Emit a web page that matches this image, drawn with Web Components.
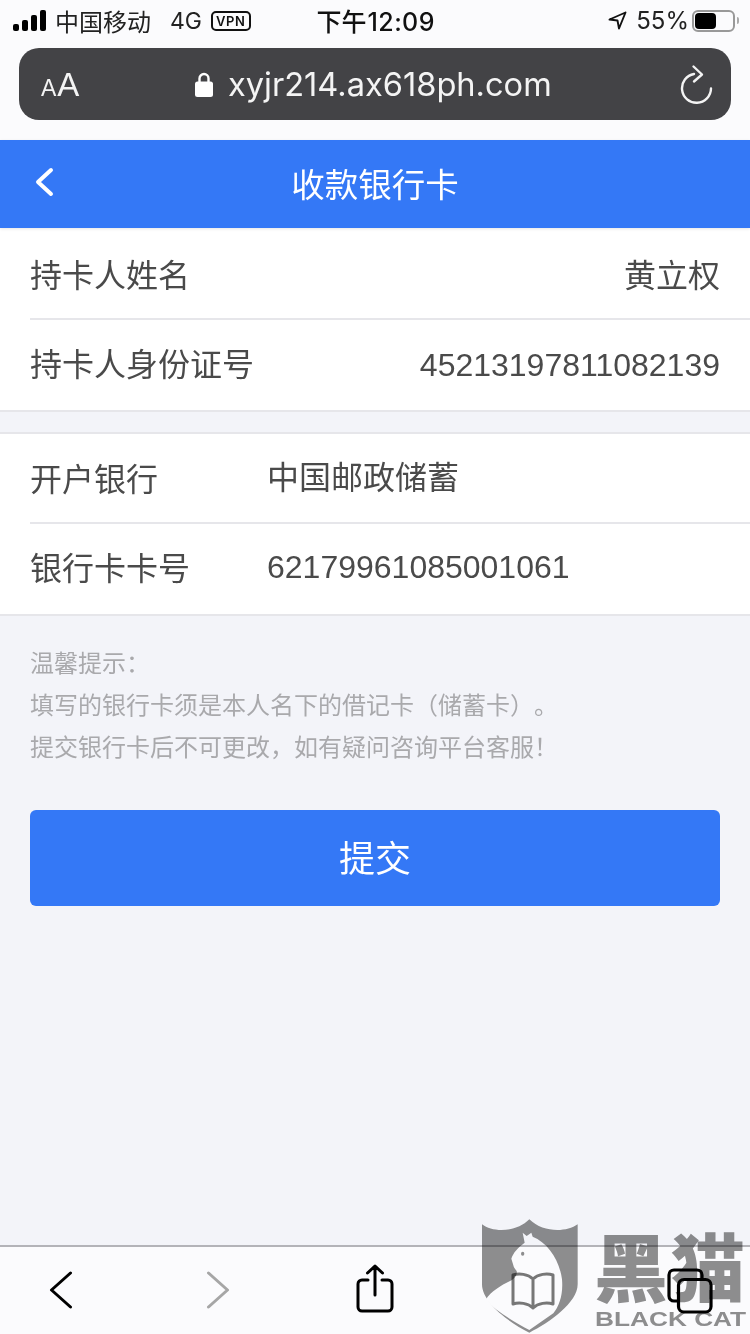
<!DOCTYPE html>
<html lang="zh">
<head>
<meta charset="utf-8">
<title>收款银行卡</title>
<style>
  html, body { margin: 0; padding: 0; }
  body {
    width: 750px;
    height: 1334px;
    overflow: hidden;
    position: relative;
    display: flex;
    flex-direction: column;
    background: #f3f4f9;
    font-family: "Liberation Sans", "Noto Sans CJK SC", sans-serif;
  }
</style>
</head>
<body>
  <ios-status></ios-status>
  <url-bar></url-bar>
  <app-header>收款银行卡</app-header>
  <info-group>
    <info-row label="持卡人姓名" side="end" style="padding-top:3px">黄立权</info-row>
    <info-row label="持卡人身份证号" side="end">45213197811082139</info-row>
  </info-group>
  <info-group spaced>
    <info-row label="开户银行" style="padding-top:3px">中国邮政储蓄</info-row>
    <info-row label="银行卡卡号">62179961085001061</info-row>
  </info-group>
  <tip-text>
    <div>温馨提示：</div>
    <div>填写的银行卡须是本人名下的借记卡（储蓄卡）。</div>
    <div>提交银行卡后不可更改，如有疑问咨询平台客服！</div>
  </tip-text>
  <submit-button>提交</submit-button>
  <safari-toolbar></safari-toolbar>
  <black-cat></black-cat>

<script>
class IosStatus extends HTMLElement {
  constructor() {
    super();
    this.attachShadow({ mode: 'open' });
    this.shadowRoot.innerHTML = `
      <style>
        :host {
          display: flex;
          align-items: center;
          height: 48px;
          padding: 0 11px 7px 13px;
          box-sizing: border-box;
          background: #fbfbfd;
          color: #111;
          font: 400 24px/32px "Noto Sans CJK SC", sans-serif;
        }
        .bars { display: flex; align-items: flex-end; gap: 3px; height: 21px; margin-bottom: 1px; }
        .bars i { display: block; width: 6px; background: #000; border-radius: 2px; }
        .carrier { margin-left: 9px; color: #222; white-space: nowrap; }
        .net { margin-left: 19px; font: 400 23px/32px Inter, sans-serif; color: #222; }
        .vpn {
          margin-left: 9px;
          border: 2px solid #111;
          border-radius: 5px;
          font: 600 13px/14px Inter, sans-serif;
          padding: 1px 3px;
          letter-spacing: .6px;
        }
        .time {
          margin-left: 66px;
          white-space: nowrap;
          font-weight: 500;
          font-size: 25px;
        }
        .time b { font: 500 25px/32px Inter, sans-serif; margin-left: 1px; letter-spacing: .4px; }
        .right { margin-left: auto; display: flex; align-items: center; }
        .pct { font: 400 24px/32px Inter, sans-serif; color: #222; margin: 0 3px 0 9px; }
        .batt {
          box-sizing: border-box;
          width: 43px; height: 22px;
          border: 2px solid #999;
          border-radius: 6px;
          padding: 1px;
        }
        .batt i { display: block; width: 21px; height: 16px; background: #000; border-radius: 4px; }
        .nub { width: 2px; height: 7px; background: #aaa; border-radius: 0 2px 2px 0; margin-left: 2px; }
      </style>
      <div class="bars">
        <i style="height:7px"></i><i style="height:11px"></i><i style="height:16px"></i><i style="height:21px"></i>
      </div>
      <span class="carrier">中国移动</span>
      <span class="net">4G</span>
      <span class="vpn">VPN</span>
      <span class="time">下午<b>12:09</b></span>
      <div class="right">
        <svg width="19" height="19" viewBox="0 0 19 19" fill="none" stroke="#111" stroke-width="1.9" stroke-linejoin="round">
          <path d="M17.5 1.5 1.5 8.5l8 1 1.5 8z"/>
        </svg>
        <span class="pct">55%</span>
        <div class="batt"><i></i></div>
        <div class="nub"></div>
      </div>
    `;
  }
}

class UrlBar extends HTMLElement {
  constructor() {
    super();
    this.attachShadow({ mode: 'open' });
    this.shadowRoot.innerHTML = `
      <style>
        :host {
          display: block;
          padding: 0 19px 20px;
          background: #fbfbfd;
        }
        .pill {
          height: 72px;
          background: #434346;
          border-radius: 20px;
          display: grid;
          grid-template-columns: 154px 1fr auto;
          align-items: center;
          color: #fff;
          padding: 0 18px 0 22px;
        }
        .aa { font: 400 33px/1 "Liberation Sans", sans-serif; color: #f4f4f4; white-space: nowrap; }
        .aa small { font-size: 23px; margin-right: 1px; }
        .addr {
          display: flex;
          align-items: center;
          gap: 15px;
          font: 400 32.6px/1 Inter, sans-serif;
          color: #f4f4f4;
          white-space: nowrap;
        }
        svg { display: block; }
      </style>
      <div class="pill">
        <span class="aa"><small>A</small>A</span>
        <div class="addr">
          <svg width="18" height="25" viewBox="0 0 18 25">
            <path d="M4.500 11V6.500a4.500 4.500 0 0 1 9 0V11" fill="none" stroke="#fff" stroke-width="2.4"/>
            <rect x="0" y="9.500" width="18" height="15.500" rx="2.500" fill="#fff"/>
          </svg>
          <span>xyjr214.ax618ph.com</span>
        </div>
        <svg width="34" height="40" viewBox="0 0 34 40" fill="none" stroke="#f4f4f4" stroke-width="2.4" stroke-linecap="round" stroke-linejoin="round">
          <path d="M15 10A14.500 14.500 0 1 0 32 24.500"/>
          <path d="M14.500 2.500l8.500 8-8 7"/>
        </svg>
      </div>
    `;
  }
}

class AppHeader extends HTMLElement {
  constructor() {
    super();
    this.attachShadow({ mode: 'open' });
    this.shadowRoot.innerHTML = `
      <style>
        :host {
          display: flex;
          align-items: center;
          justify-content: center;
          height: 88px;
          box-sizing: border-box;
          padding-bottom: 3px;
          background: #3478f6;
          color: #fff;
          font: 400 33.5px/1 "Noto Sans CJK SC", sans-serif;
          position: relative;
          box-shadow: 0 1px 3px rgba(0, 0, 0, .1);
        }
        svg { position: absolute; left: 34px; top: 27px; }
      </style>
      <svg width="20" height="30" viewBox="0 0 20 30" fill="none" stroke="#fff" stroke-width="4" stroke-linecap="round" stroke-linejoin="round">
        <path d="M17 3 4 15l13 12"/>
      </svg>
      <slot></slot>
    `;
  }
}

class InfoGroup extends HTMLElement {
  constructor() {
    super();
    this.attachShadow({ mode: 'open' });
    this.shadowRoot.innerHTML = `
      <style>
        :host {
          display: block;
          background: #fff;
          padding-top: 2px;
          border-bottom: 2px solid #e6e6ea;
        }
        :host([spaced]) {
          margin-top: 20px;
          padding-top: 0;
          border-top: 2px solid #e6e6ea;
        }
      </style>
      <slot></slot>
    `;
  }
}

class InfoRow extends HTMLElement {
  constructor() {
    super();
    this.attachShadow({ mode: 'open' });
    const end = this.getAttribute('side') === 'end';
    this.shadowRoot.innerHTML = `
      <style>
        :host {
          display: flex;
          align-items: center;
          height: 90px;
          margin-left: 30px;
          padding-right: 30px;
          box-sizing: border-box;
          font: 400 32px/1 "Liberation Sans", "Noto Sans CJK SC", sans-serif;
          color: #4a4a4a;
        }
        :host(:not(:last-child)) { border-bottom: 2px solid #e6e6ea; }
        .label { width: 237px; flex: none; white-space: nowrap; }
        .value {
          flex: 1;
          white-space: nowrap;
          text-align: ${end ? 'right' : 'left'};
          padding-bottom: ${end ? 0 : 4}px;
        }
      </style>
      <span class="label">${this.getAttribute('label')}</span>
      <span class="value"><slot></slot></span>
    `;
  }
}

class TipText extends HTMLElement {
  constructor() {
    super();
    this.attachShadow({ mode: 'open' });
    this.shadowRoot.innerHTML = `
      <style>
        :host {
          display: block;
          padding: 25px 30px 0;
          font: 400 24px/42px "Noto Sans CJK SC", sans-serif;
          color: #a9a9ac;
          text-spacing-trim: space-all;
          white-space: nowrap;
        }
      </style>
      <slot></slot>
    `;
  }
}

class SubmitButton extends HTMLElement {
  constructor() {
    super();
    this.attachShadow({ mode: 'open' });
    this.shadowRoot.innerHTML = `
      <style>
        :host {
          display: block;
          margin: 43px 30px 0;
        }
        button {
          display: block;
          width: 100%;
          height: 96px;
          padding: 0 0 4px;
          border: 0;
          border-radius: 6px;
          background: #3478f6;
          color: #fff;
          font: 400 36px/1 "Noto Sans CJK SC", sans-serif;
        }
      </style>
      <button type="button"><slot></slot></button>
    `;
  }
}

class SafariToolbar extends HTMLElement {
  constructor() {
    super();
    this.attachShadow({ mode: 'open' });
    this.shadowRoot.innerHTML = `
      <style>
        :host {
          display: block;
          margin-top: auto;
          height: 89px;
          box-sizing: border-box;
          border-top: 2px solid #b3b3b8;
          background: #fbfbfd;
        }
        .items {
          display: grid;
          grid-template-columns: repeat(5, 157px);
          margin-left: -18px;
          justify-items: center;
          align-items: start;
        }
        svg { display: block; }
      </style>
      <div class="items">
        <svg style="margin-top:24px" width="24" height="38" viewBox="0 0 24 38" fill="none" stroke="#000" stroke-width="3" stroke-linecap="round" stroke-linejoin="round">
          <path d="M21.500 2 2.500 19l19 17"/>
        </svg>
        <svg style="margin-top:24px" width="24" height="38" viewBox="0 0 24 38" fill="none" stroke="#a6a6a6" stroke-width="3" stroke-linecap="round" stroke-linejoin="round">
          <path d="M2.500 2l19 17-19 17"/>
        </svg>
        <svg style="margin-top:17px" width="38" height="49" viewBox="0 0 38 49" fill="none" stroke="#000" stroke-width="3" stroke-linecap="round" stroke-linejoin="round">
          <path d="M12 16H6a4 4 0 0 0-4 4v23a4 4 0 0 0 4 4h26a4 4 0 0 0 4-4V20a4 4 0 0 0-4-4h-6"/>
          <path d="M19 31V2M11.500 9 19 2l7.500 7"/>
        </svg>
        <svg style="margin:25px 0 0 2px" width="46" height="38" viewBox="0 0 46 38" fill="none" stroke="#777" stroke-width="3" stroke-linecap="round" stroke-linejoin="round">
          <path d="M23 7C18 2 9 1 3 3v29c6-2 15-1 20 4 5-5 14-6 20-4V3c-6-2-15-1-20 4zM23 7v29"/>
        </svg>
        <svg style="margin:21px 0 0 2px" width="46" height="46" viewBox="0 0 46 46" fill="none" stroke="#000" stroke-width="3.200" stroke-linejoin="round">
          <path d="M11 33H7a5 5 0 0 1-5-5V7a5 5 0 0 1 5-5h23a5 5 0 0 1 5 5v4"/>
          <rect x="11.500" y="11.500" width="32.500" height="32.500" rx="5.500"/>
        </svg>
      </div>
    `;
  }
}

class BlackCat extends HTMLElement {
  constructor() {
    super();
    this.attachShadow({ mode: 'open' });
    this.shadowRoot.innerHTML = `
      <style>
        :host {
          display: block;
          position: absolute;
          left: 476px;
          top: 1216px;
          width: 274px;
          height: 118px;
          pointer-events: none;
          mix-blend-mode: multiply;
        }
        svg { position: absolute; left: 0; top: 0; }
        .zh {
          position: absolute;
          left: 118px;
          top: 11px;
          font: 900 74px/74px "Noto Sans CJK SC", sans-serif;
          letter-spacing: 3px;
          color: #8f8f8f;
          white-space: nowrap;
        }
        .en {
          position: absolute;
          left: 119px;
          top: 91px;
          font: 700 21px/24px "Liberation Sans", sans-serif;
          color: #8f8f8f;
          white-space: nowrap;
          transform: scaleX(1.25);
          transform-origin: left center;
        }
      </style>
      <svg width="110" height="118" viewBox="0 0 330 354">
        <path d="M18 25C50 50 120 50 160 10c40 40 110 40 145 15v180c0 55-85 115-145 145C100 320 18 260 18 205z" fill="#8f8f8f"/>
        <path d="M30 250c15-25 50-45 78-58 10-7 16-17 14-27-6-7-10-13-10-17l-6-20c6-18 19-33 40-48l-6-30 12 10 14-10 4 12c45 18 80 68 88 128 4 45-8 80-26 102l-72 50C120 320 55 285 30 250z" fill="#fff"/>
        <ellipse cx="140" cy="113" rx="5" ry="6" fill="#8f8f8f"/>
      </svg>
      <span class="zh">黑猫</span>
      <span class="en">BLACK CAT</span>
    `;
  }
}

customElements.define('ios-status', IosStatus);
customElements.define('url-bar', UrlBar);
customElements.define('app-header', AppHeader);
customElements.define('info-group', InfoGroup);
customElements.define('info-row', InfoRow);
customElements.define('tip-text', TipText);
customElements.define('submit-button', SubmitButton);
customElements.define('safari-toolbar', SafariToolbar);
customElements.define('black-cat', BlackCat);
</script>
</body>
</html>
